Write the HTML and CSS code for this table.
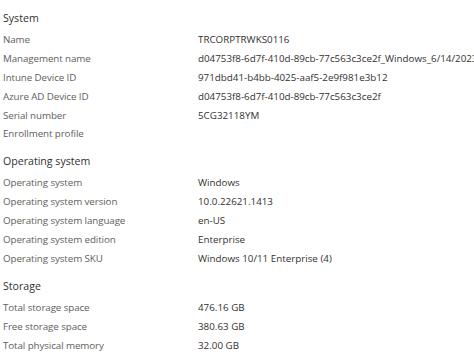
FILE: index.html
```html
<!DOCTYPE html>
<html lang="en">
<head>
  <meta charset="UTF-8">
  <meta name="viewport" content="width=device-width, initial-scale=1.0">
  <title>Device properties</title>
  <link rel="stylesheet" href="styles.css">
</head>
<body>
  <div class="section first">
    <h2>System</h2>
    <div class="row"><span class="label">Name</span><span class="value">TRCORPTRWKS0116</span></div>
    <div class="row"><span class="label">Management name</span><span class="value">d04753f8-6d7f-410d-89cb-77c563c3ce2f_Windows_6/14/2023</span></div>
    <div class="row"><span class="label">Intune Device ID</span><span class="value">971dbd41-b4bb-4025-aaf5-2e9f981e3b12</span></div>
    <div class="row"><span class="label">Azure AD Device ID</span><span class="value">d04753f8-6d7f-410d-89cb-77c563c3ce2f</span></div>
    <div class="row"><span class="label">Serial number</span><span class="value">5CG32118YM</span></div>
    <div class="row"><span class="label">Enrollment profile</span><span class="value"></span></div>
  </div>

  <div class="section">
    <h2>Operating system</h2>
    <div class="row"><span class="label">Operating system</span><span class="value">Windows</span></div>
    <div class="row"><span class="label">Operating system version</span><span class="value">10.0.22621.1413</span></div>
    <div class="row"><span class="label">Operating system language</span><span class="value">en-US</span></div>
    <div class="row"><span class="label">Operating system edition</span><span class="value">Enterprise</span></div>
    <div class="row"><span class="label">Operating system SKU</span><span class="value">Windows 10/11 Enterprise (4)</span></div>
  </div>

  <div class="section">
    <h2>Storage</h2>
    <div class="row"><span class="label">Total storage space</span><span class="value">476.16 GB</span></div>
    <div class="row"><span class="label">Free storage space</span><span class="value">380.63 GB</span></div>
    <div class="row"><span class="label">Total physical memory</span><span class="value">32.00 GB</span></div>
  </div>
</body>
</html>
```

FILE: styles.css
```css
body {
  margin: 0;
  padding: 0 0 0 3px;
  background: #fff;
  font-family: "Open Sans", "Noto Sans", sans-serif;
  font-size: 9.8px;
  color: #323130;
  overflow: hidden;
}

.section {
  margin-top: 6px;
}

.section.first {
  margin-top: 7px;
}

.section h2 {
  margin: 0 0 2px;
  font-size: 10.6px;
  font-weight: 400;
  line-height: 22px;
  color: #323130;
}

.row {
  display: flex;
  height: 18.9px;
  line-height: 18.9px;
  white-space: nowrap;
}

.label {
  width: 195px;
  flex-shrink: 0;
  color: #605e5c;
  letter-spacing: -0.1px;
}

.value {
  color: #323130;
}
```
